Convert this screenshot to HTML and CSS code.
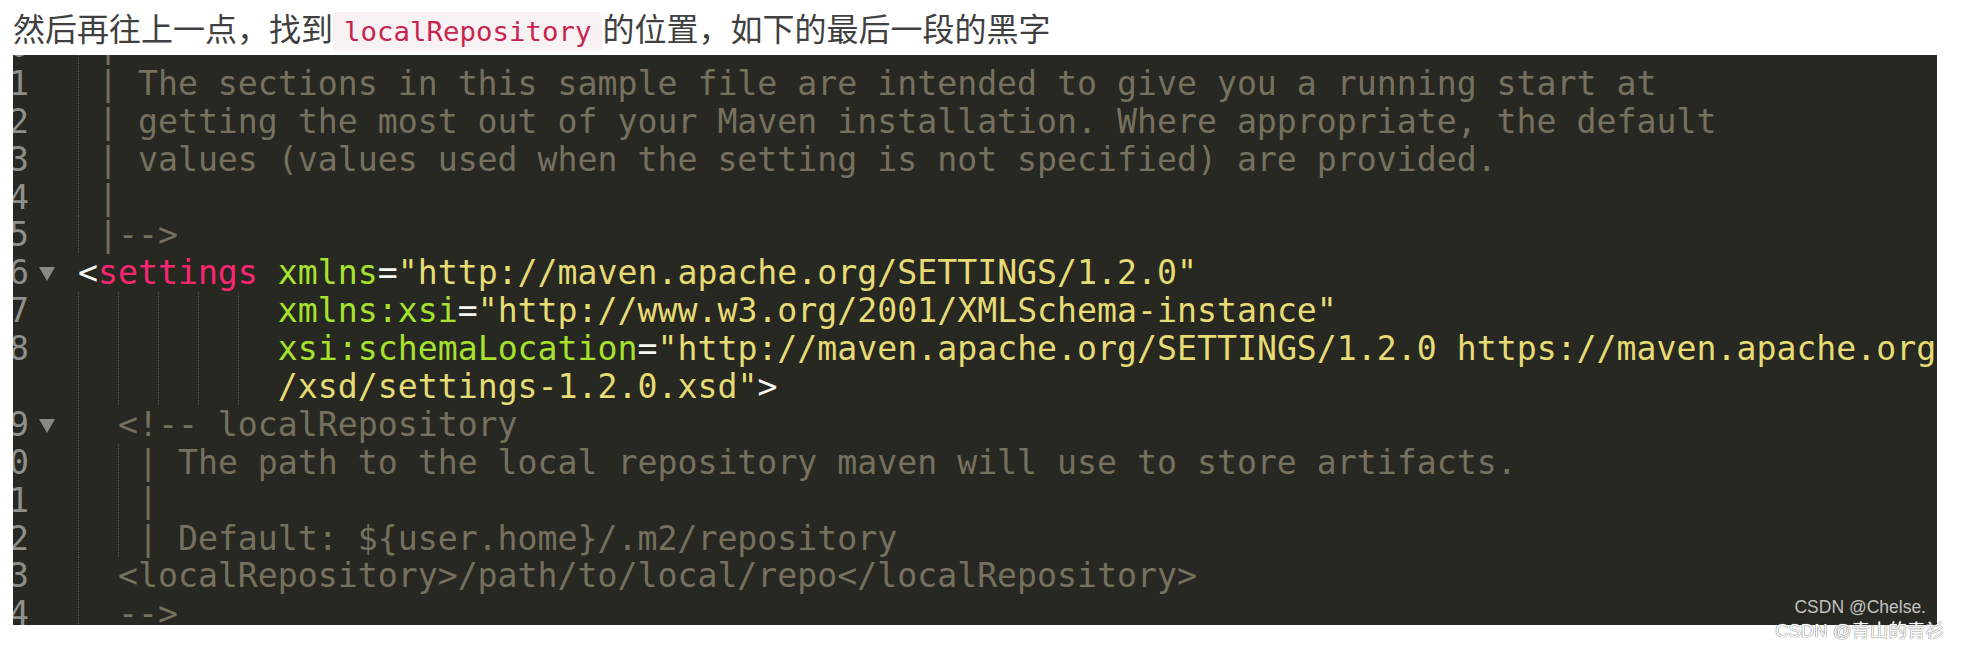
FILE: index.html
```html
<!DOCTYPE html>
<html lang="zh-CN">

<head>
  <meta charset="UTF-8" />
  <meta name="viewport" content="width=device-width, initial-scale=1.0" />
  <link rel="stylesheet" href="styles.css">
</head>

<body>
  <div class="post">
    <p class="lead">然后再往上一点，找到<code>localRepository</code>的位置，如下的最后一段的黑字</p>

    <div class="editor">
      <div class="lines">
        <div class="row"><div class="gutter"><span class="num">0</span></div><div class="code"><span class="g"> </span><span class="c">|</span></div></div>
        <div class="row"><div class="gutter"><span class="num">1</span></div><div class="code"><span class="g"> </span><span class="c">| The sections in this sample file are intended to give you a running start at</span></div></div>
        <div class="row"><div class="gutter"><span class="num">2</span></div><div class="code"><span class="g"> </span><span class="c">| getting the most out of your Maven installation. Where appropriate, the default</span></div></div>
        <div class="row"><div class="gutter"><span class="num">3</span></div><div class="code"><span class="g"> </span><span class="c">| values (values used when the setting is not specified) are provided.</span></div></div>
        <div class="row"><div class="gutter"><span class="num">4</span></div><div class="code"><span class="g"> </span><span class="c">|</span></div></div>
        <div class="row"><div class="gutter"><span class="num">5</span></div><div class="code"><span class="g"> </span><span class="c">|--&gt;</span></div></div>
        <div class="row"><div class="gutter"><span class="num">6</span><span class="fold"></span></div><div class="code">&lt;<span class="t">settings</span> <span class="a">xmlns</span>=<span class="s">"http://maven.apache.org/SETTINGS/1.2.0"</span></div></div>
        <div class="row"><div class="gutter"><span class="num">7</span></div><div class="code"><span class="g">  </span><span class="g">  </span><span class="g">  </span><span class="g">  </span><span class="g">  </span><span class="a">xmlns:xsi</span>=<span class="s">"http://www.w3.org/2001/XMLSchema-instance"</span></div></div>
        <div class="row"><div class="gutter"><span class="num">8</span></div><div class="code"><span class="g">  </span><span class="g">  </span><span class="g">  </span><span class="g">  </span><span class="g">  </span><span class="a">xsi:schemaLocation</span>=<span class="s">"http://maven.apache.org/SETTINGS/1.2.0 https://maven.apache.org</span></div></div>
        <div class="row"><div class="gutter"></div><div class="code"><span class="g">  </span><span class="g">  </span><span class="g">  </span><span class="g">  </span><span class="g">  </span><span class="s">/xsd/settings-1.2.0.xsd"</span>&gt;</div></div>
        <div class="row"><div class="gutter"><span class="num">9</span><span class="fold"></span></div><div class="code"><span class="g">  </span><span class="c">&lt;!-- localRepository</span></div></div>
        <div class="row"><div class="gutter"><span class="num">0</span></div><div class="code"><span class="g">  </span><span class="g"> </span><span class="c">| The path to the local repository maven will use to store artifacts.</span></div></div>
        <div class="row"><div class="gutter"><span class="num">1</span></div><div class="code"><span class="g">  </span><span class="g"> </span><span class="c">|</span></div></div>
        <div class="row"><div class="gutter"><span class="num">2</span></div><div class="code"><span class="g">  </span><span class="g"> </span><span class="c">| Default: ${user.home}/.m2/repository</span></div></div>
        <div class="row"><div class="gutter"><span class="num">3</span></div><div class="code"><span class="g">  </span><span class="c">&lt;localRepository&gt;/path/to/local/repo&lt;/localRepository&gt;</span></div></div>
        <div class="row"><div class="gutter"><span class="num">4</span></div><div class="code"><span class="g">  </span><span class="c">--&gt;</span></div></div>
      </div>
    </div>
  </div>

  <div class="mark mark-a">CSDN @Chelse.</div>
  <div class="mark mark-b">CSDN @青山的青衫</div>
</body>

</html>
```

FILE: styles.css
```css
html,
body {
  margin: 0;
  background: #fff;
}

body {
  position: relative;
  width: 1962px;
  height: 652px;
  overflow: hidden;
}

.post {
  padding: 0 25px 0 13px;
}

.lead {
  margin: 0;
  height: 55px;
  line-height: 55px;
  font-family: "Noto Sans CJK SC", sans-serif;
  font-size: 32px;
  color: #404040;
  white-space: nowrap;
}

.lead code {
  font-family: "DejaVu Sans Mono", monospace;
  font-size: 27.4px;
  line-height: 1;
  padding: 4px 11px;
  color: #c7254e;
  background-color: #f9f2f4;
  border-radius: 4px;
}

.editor {
  width: 1924px;
  height: 570px;
  overflow: hidden;
  background-color: #272822;
  font-family: "DejaVu Sans Mono", monospace;
  font-size: 33.2px;
}

.lines {
  margin-top: -28px;
}

.row {
  display: flex;
  height: 37.9px;
  line-height: 37.9px;
}

.gutter {
  flex: none;
  display: flex;
  align-items: center;
  width: 65px;
  color: #8f908a;
}

.gutter .num {
  width: 20px;
  margin-left: -4px;
  text-align: right;
}

.gutter .fold {
  margin: 2px 0 0 10px;
  width: 0;
  height: 0;
  border-left: 8px solid transparent;
  border-right: 8px solid transparent;
  border-top: 14px solid #8a8a85;
}

.code {
  white-space: pre;
  color: #f8f8f2;
}

.code .g {
  display: inline-block;
  vertical-align: top;
  height: 37.9px;
  background: linear-gradient(#5d5d56 50%, transparent 50%) 0 0 / 1px 2px repeat-y;
}

.code .c {
  color: #75715e;
}

.code .t {
  color: #f92672;
}

.code .a {
  color: #a6e22e;
}

.code .s {
  color: #e6db74;
}

.mark {
  position: absolute;
  font-family: "Liberation Sans", "Noto Sans CJK SC", sans-serif;
  white-space: nowrap;
}

.mark-a {
  right: 36px;
  top: 599px;
  font-size: 17.5px;
  line-height: 17.5px;
  color: rgba(255, 255, 255, 0.72);
}

.mark-b {
  right: 18px;
  top: 622px;
  font-size: 18.5px;
  line-height: 18.5px;
  color: #fff;
  text-shadow: 0 0 1px #6e6e6e, 0 0 1px #6e6e6e;
}
```
